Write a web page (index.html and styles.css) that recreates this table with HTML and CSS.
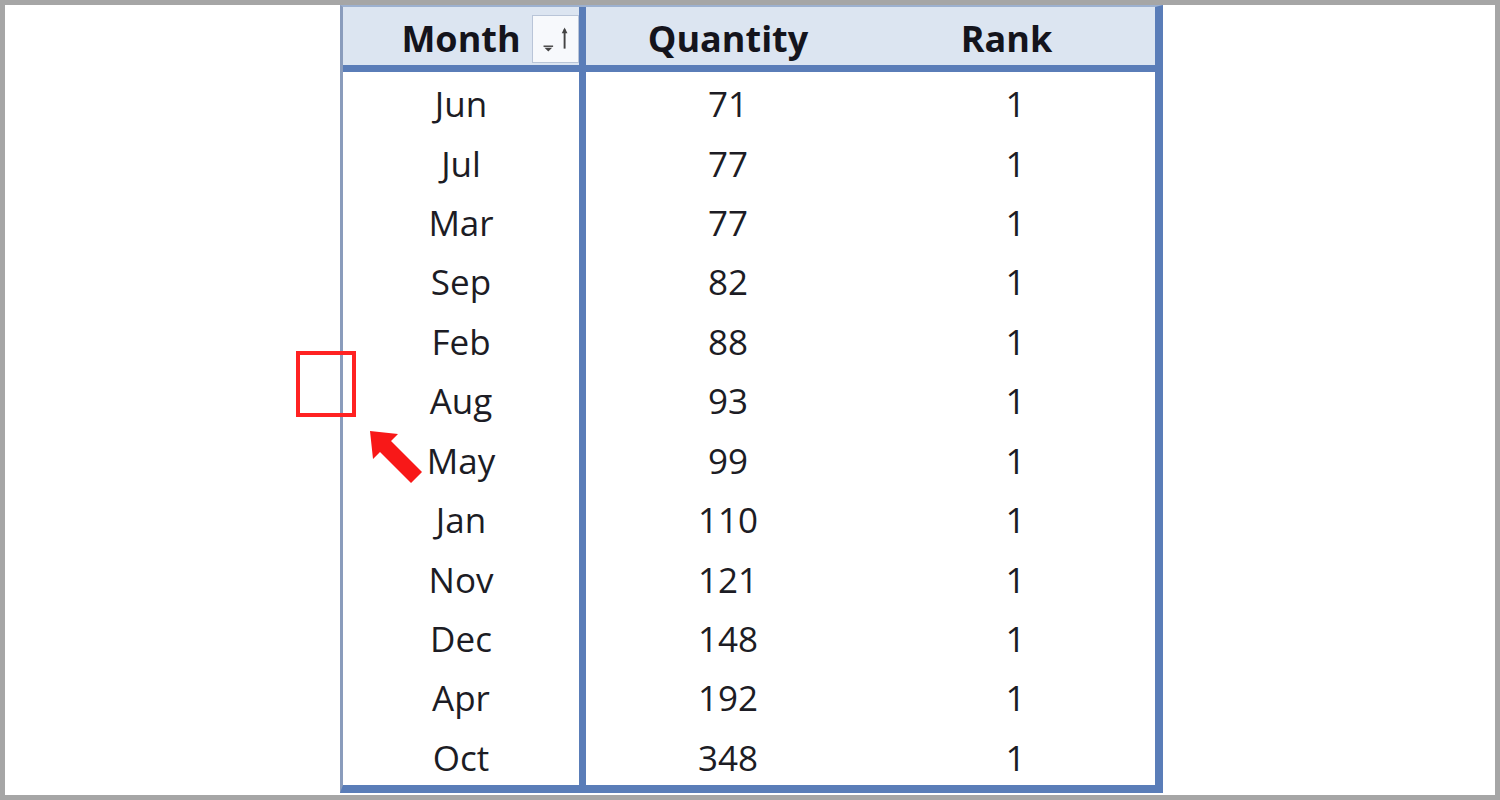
FILE: index.html
```html
<!DOCTYPE html>
<html>
<head>
<meta charset="utf-8">
<link rel="stylesheet" href="styles.css">
</head>
<body>
<div class="frame">
  <div class="sheet">
    <div class="hcell month-h">
      <span>Month</span>
      <span class="sortbtn">
        <svg width="47" height="48" viewBox="0 0 47 48">
          <line x1="11" y1="30.5" x2="21" y2="30.5" stroke="#444" stroke-width="1.5"/>
          <polygon points="12,32 20,32 16,36" fill="#444"/>
          <line x1="33" y1="13" x2="33" y2="33" stroke="#444" stroke-width="2"/>
          <polygon points="30,17 36,17 33,11" fill="#444"/>
        </svg>
      </span>
    </div>
    <div class="hcell">Quantity</div>
    <div class="hcell rank-h">Rank</div>

    <div class="cell mcol">Jun</div><div class="cell">71</div><div class="cell rcol">1</div>
    <div class="cell mcol">Jul</div><div class="cell">77</div><div class="cell rcol">1</div>
    <div class="cell mcol">Mar</div><div class="cell">77</div><div class="cell rcol">1</div>
    <div class="cell mcol">Sep</div><div class="cell">82</div><div class="cell rcol">1</div>
    <div class="cell mcol">Feb</div><div class="cell">88</div><div class="cell rcol">1</div>
    <div class="cell mcol">Aug</div><div class="cell">93</div><div class="cell rcol">1</div>
    <div class="cell mcol">May</div><div class="cell">99</div><div class="cell rcol">1</div>
    <div class="cell mcol">Jan</div><div class="cell">110</div><div class="cell rcol">1</div>
    <div class="cell mcol">Nov</div><div class="cell">121</div><div class="cell rcol">1</div>
    <div class="cell mcol">Dec</div><div class="cell">148</div><div class="cell rcol">1</div>
    <div class="cell mcol">Apr</div><div class="cell">192</div><div class="cell rcol">1</div>
    <div class="cell mcol">Oct</div><div class="cell">348</div><div class="cell rcol">1</div>
  </div>

  <div class="mark-box"></div>
  <svg class="mark-arrow" width="70" height="70" viewBox="0 0 70 70">
    <polygon points="0,0 28,3 21,10 52,41 41,52 10,21 3,28" fill="#f81818"/>
  </svg>
</div>
</body>
</html>
```

FILE: styles.css
```css
html, body {
  margin: 0;
  padding: 0;
  background: #ffffff;
}

.frame {
  position: relative;
  width: 1500px;
  height: 800px;
  box-sizing: border-box;
  border: 5px solid #a6a6a6;
  background: #ffffff;
  overflow: hidden;
}

.sheet {
  margin-left: 335px;
  width: 823px;
  height: 788px;
  box-sizing: border-box;
  border-left: 3px solid #8a9cbc;
  border-top: 2px solid #9db1d0;
  border-right: 8px solid #5a7db8;
  border-bottom: 8px solid #5a7db8;
  display: grid;
  grid-template-columns: 243px 284px 285px;
  grid-template-rows: 65px repeat(12, 1fr);
  font-family: "Open Sans", "Liberation Sans", sans-serif;
  color: #1c1c24;
}

.hcell {
  background: #dce5f1;
  border-bottom: 7px solid #5a7db8;
  display: flex;
  align-items: center;
  justify-content: center;
  font-weight: 700;
  font-size: 36px;
  color: #14141c;
  padding-top: 5px;
  box-sizing: border-box;
}

.month-h {
  position: relative;
  border-right: 7px solid #5a7db8;
}

.rank-h {
  padding-right: 12px;
}

.sortbtn {
  position: absolute;
  right: 0;
  top: 8px;
  width: 47px;
  height: 48px;
  box-sizing: border-box;
  border: 1px solid #b9c5d8;
  background: #f7f9fc;
  display: flex;
}

.sortbtn svg {
  display: block;
}

.cell {
  display: flex;
  align-items: center;
  justify-content: center;
  font-size: 35px;
  background: #ffffff;
  padding-top: 4px;
  box-sizing: border-box;
}

.mcol {
  border-right: 7px solid #5a7db8;
}

.rcol {
  padding-left: 6px;
}

.mark-box {
  position: absolute;
  left: 291px;
  top: 346px;
  width: 60px;
  height: 66px;
  box-sizing: border-box;
  border: 4px solid #ff2222;
}

.mark-arrow {
  position: absolute;
  left: 365px;
  top: 426px;
}
```
